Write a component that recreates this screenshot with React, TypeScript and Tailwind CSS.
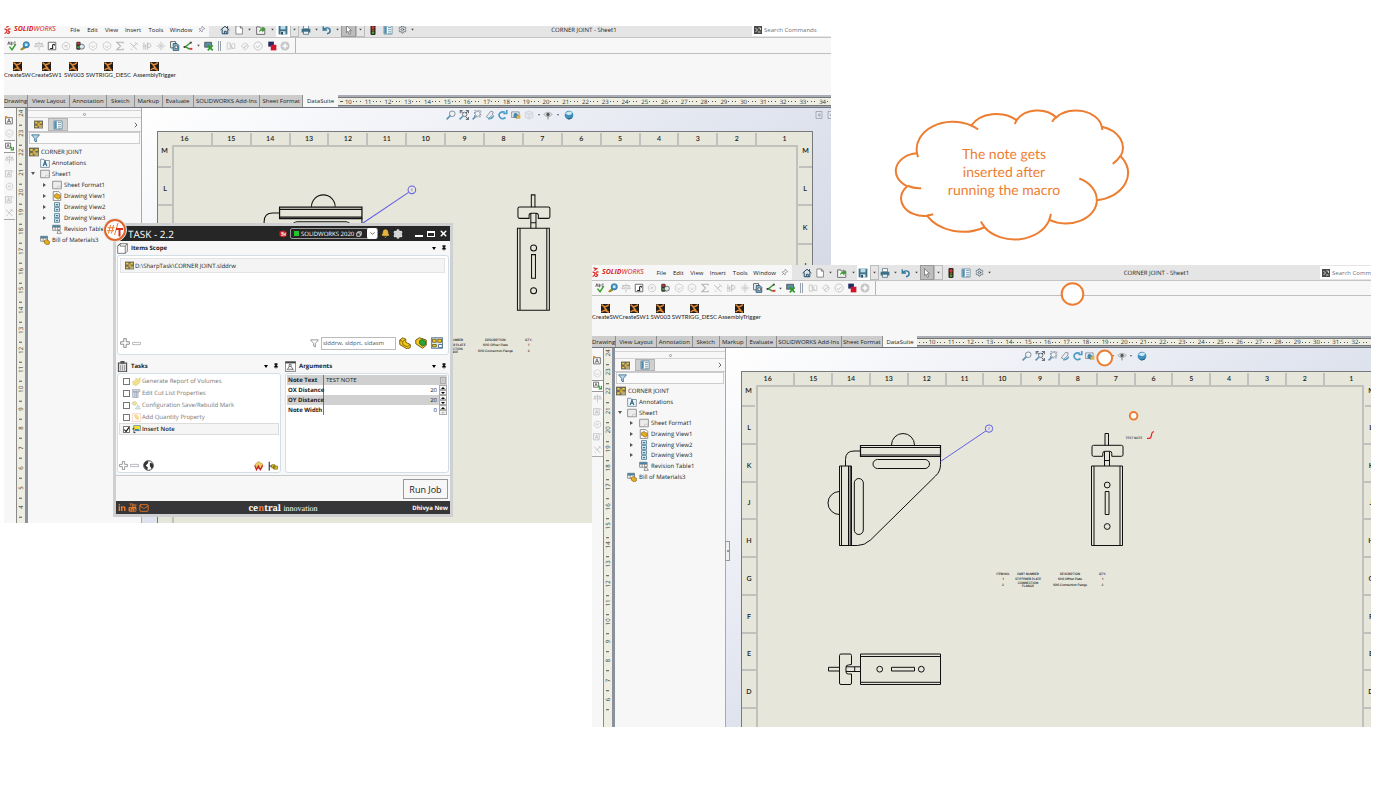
import { useState } from "react";
import type { ReactNode } from "react";
import clsx from "clsx";
import { Pin, Settings, Mail, Bell, ChevronDown, ChevronRight, X } from "lucide-react";
import { FaLinkedinIn } from "react-icons/fa";

type Size = "large" | "small";

const menus = ["File", "Edit", "View", "Insert", "Tools", "Window"];
const macros = ["CreateSW", "CreateSW1", "SW003", "SWTRIGG_DESC", "AssemblyTrigger"];
const tabs = ["Drawing", "View Layout", "Annotation", "Sketch", "Markup", "Evaluate", "SOLIDWORKS Add-Ins", "Sheet Format", "DataSuite"];
const zoneRows = ["L", "K", "J", "H", "G", "F", "E", "D"];

function range(from: number, to: number) {
  const out: number[] = [];
  for (let i = from; from < to ? i <= to : i >= to; i += from < to ? 1 : -1) out.push(i);
  return out;
}

/* ---------- icons ---------- */

const glyphs: Record<string, ReactNode> = {
  caret: <path d="M5 6h6l-3 4z" fill="#444" />,
  home: <path d="M1 8l7-6 7 6M3.500 7v7h9V7M7 14v-4h3v4M12 2v3" stroke="#1f4e66" fill="none" strokeWidth="1.600" />,
  file: <path d="M3 1.500h7l3.500 3.500v9.500H3zM10 1.500V5h3.500" stroke="#555" fill="#fff" />,
  open: (
    <>
      <path d="M1 3h5l1 2h7v10H1z" fill="#f6f6f6" stroke="#555" strokeWidth="1.300" />
      <path d="M5 12c0-5 3-6 5-6V2l5 5-5 5V9c-2 0-4 .5-5 3z" fill="#3f9b35" />
    </>
  ),
  save: (
    <>
      <path d="M1 1h14v14H1z" fill="#3f7189" />
      <path d="M4 1h8v6H4z" fill="#b9dbe9" />
      <path d="M4 10h8v5H4z" fill="#d9e6ec" />
      <path d="M5 11h3v4H5z" fill="#24465a" />
    </>
  ),
  print: (
    <>
      <path d="M4 1h8v5H4z" fill="#fff" stroke="#31566b" />
      <path d="M1 6h14v6H1z" fill="#3c708a" />
      <path d="M4 10h8v5H4z" fill="#e5eff4" stroke="#31566b" />
    </>
  ),
  undo: <path d="M2 2v6h6M2.500 7.500C6 3 13 4 13 9c0 3-2 4.500-5 5" stroke="#32779d" fill="none" strokeWidth="2.200" />,
  cursor: <path d="M4 1l8 8H8.500l2 5-2 1-2-5L4 12z" fill="#fff" stroke="#555" />,
  traffic: (
    <>
      <rect x="4" y="0" width="8" height="16" rx="2" fill="#322" />
      <circle cx="8" cy="4" r="2.400" fill="#d33a2c" />
      <circle cx="8" cy="8.500" r="1.800" fill="#8a6a1a" />
      <circle cx="8" cy="12.500" r="2.200" fill="#3fa23c" />
    </>
  ),
  list: (
    <>
      <path d="M1.500 1.500h13v13h-13z" fill="#fff" stroke="#3b6f8c" />
      <path d="M2 2h4v12H2z" fill="#4e8fb0" />
      <path d="M8 4h5M8 7h5M8 10h5M8 13h5" stroke="#3b6f8c" />
    </>
  ),
  spell: (
    <>
      <path d="M1 6l2-5 2 5M2 4.500h2M6.500 1v5h1.500q1-1 0-2.500H7q2-1 0-2M14 2q-3-2-3 1.500T14 5" stroke="#333" fill="none" />
      <path d="M4 9l4 5 6-9" stroke="#35a02c" fill="none" strokeWidth="2.400" />
    </>
  ),
  zoomPart: (
    <>
      <path d="M7 9l-6 5M2 14l6-3" stroke="#a48620" strokeWidth="2.400" />
      <circle cx="10" cy="6" r="5" fill="#3f9ad0" stroke="#285a78" />
      <path d="M8 4h4v4H8z" fill="#d7e9f2" />
    </>
  ),
  scale: <path d="M8 1v14M2 4h12M1 9l2.500-5L6 9zM10 9l2.500-5L15 9z" stroke="#bdbdbd" fill="none" strokeWidth="1.300" />,
  note: (
    <>
      <path d="M2 2h12v12H2z" fill="#fff" stroke="#666" strokeWidth="1.500" />
      <path d="M5 12h4V6M9 6q3-2 3 1" stroke="#222" fill="none" strokeWidth="1.800" />
    </>
  ),
  ringGrey: <path d="M8 2a6 6 0 1 0 .1 0M5 9l6-3M6 6l4 5" stroke="#c4c4c4" fill="none" strokeWidth="1.300" />,
  lights: (
    <>
      <rect x="2" y="1" width="7" height="13" rx="2" fill="#333" />
      <circle cx="5.500" cy="4" r="2" fill="#d43a2b" />
      <circle cx="5.500" cy="10" r="2" fill="#43a03b" />
      <circle cx="11" cy="9" r="4" fill="#dceaf0" stroke="#333" />
    </>
  ),
  hexGrey: <path d="M8 1l6 3.500v6L8 15l-6-4V4.500zM5 7l3 4 3-4" stroke="#c6c6c6" fill="none" strokeWidth="1.200" />,
  sigma: <path d="M13 4V2H3l6 6-6 6h10v-2" stroke="#b5b5b5" fill="none" strokeWidth="1.700" />,
  crossGrey: <path d="M2 3l11 11M13 3L6 10M3 12l2 2M10 2l4 4" stroke="#bdbdbd" fill="none" strokeWidth="1.600" />,
  barsGrey: <path d="M3 2v12M6 5v9M1 8h6M9 3l5 2v4l-5 2zM9 3v11" stroke="#c0c0c0" fill="none" strokeWidth="1.400" />,
  starGrey: <path d="M8 1v14M1 8h14M4 4l2 2M12 4l-2 2M4 12l2-2M12 12l-2-2" stroke="#c0c0c0" fill="none" strokeWidth="1.400" />,
  docs: (
    <>
      <path d="M1 1h8v10H1z" fill="#fff" stroke="#444" strokeWidth="1.300" />
      <path d="M5 4h6l3 3v8H5z" fill="#7fb0cb" stroke="#2a5068" strokeWidth="1.300" />
      <path d="M8 8h4v4H8z" fill="#fff" stroke="#444" />
    </>
  ),
  section: (
    <>
      <path d="M13 2L4 9l6 4" stroke="#3d9a3a" fill="none" strokeWidth="2.400" />
      <path d="M11 1h3v3h-3zM1 8h3v3H1z" fill="#444" />
      <path d="M10 11h5v3h-5z" fill="#cf3a2c" />
    </>
  ),
  tableX: (
    <>
      <path d="M1 2h11v8H1z" fill="#5d8ba3" stroke="#333" />
      <path d="M6 7l8 8M14 7l-8 8" stroke="#2f9b2b" strokeWidth="2.600" />
    </>
  ),
  partGrey: <path d="M2 3v10h5V3zM9 6l3-3 2 2v7h-5zM5 6l6 5" stroke="#c8c8c8" fill="none" strokeWidth="1.400" />,
  layersGrey: <path d="M2 8l6-5 4 2-6 6zM5 12l6-5 3 1-5 6z" stroke="#c8c8c8" fill="none" strokeWidth="1.400" />,
  checkGrey: <path d="M8 1.500a6.500 6.500 0 1 0 .1 0M5 8l2.500 3 4-5" stroke="#c6c6c6" fill="none" strokeWidth="1.500" />,
  colors: (
    <>
      <path d="M2 1h9v8H2z" fill="#1f2d63" />
      <path d="M6 6h9v9H6z" fill="#d4142b" />
    </>
  ),
  plusGrey: (
    <>
      <circle cx="8" cy="8" r="6.500" fill="#c9c9c9" stroke="#b8b8b8" />
      <path d="M8 4v8M4 8h8" stroke="#fff" strokeWidth="2.400" />
    </>
  ),
  macro: (
    <>
      <path d="M0 0h16v16H0z" fill="#221d1a" />
      <path d="M1 1l5 4 4-1 4-3M1 14l5-3 3 1 5 3M5 5l6 7" stroke="#e08a35" fill="none" strokeWidth="2.600" />
    </>
  ),
  lens: (
    <>
      <circle cx="10" cy="6" r="4.500" fill="#eef4f8" stroke="#7d8994" strokeWidth="1.500" />
      <path d="M7 9l-6 6" stroke="#5f93b5" strokeWidth="2.600" />
    </>
  ),
  lensFit: (
    <>
      <path d="M2 5V1h4M11 1h4v4M15 11v4h-4" stroke="#67727c" fill="none" strokeWidth="1.800" />
      <circle cx="9" cy="7" r="3.500" fill="#e6eef4" stroke="#67727c" strokeWidth="1.500" />
      <path d="M6 10l-5 5" stroke="#5f93b5" strokeWidth="2.600" />
      <path d="M3 2l3 3M14 2l-3 3M14 14l-3-3" stroke="#555" strokeWidth="1.500" />
    </>
  ),
  lensArea: (
    <>
      <path d="M4 1h10v10H4z" stroke="#8d98a3" fill="none" strokeWidth="1.500" strokeDasharray="3 2" />
      <circle cx="9" cy="6" r="4" fill="#eef4f8" stroke="#8d98a3" strokeWidth="1.300" />
      <path d="M6 10l-5 5" stroke="#5f93b5" strokeWidth="2.600" />
    </>
  ),
  pen: (
    <>
      <path d="M2 11l7-9 4 1-1 5-6 5z" fill="#e8edf1" stroke="#7c8690" strokeWidth="1.300" />
      <path d="M5 14q6 1 9-5" stroke="#5aa0c6" fill="none" strokeWidth="2.200" />
    </>
  ),
  rotate: <path d="M12 12q-5 4-8.500 0t-.5-7 8-1.500M14 0v5.500H8.500" stroke="#4b9bc8" fill="none" strokeWidth="2.600" />,
  views: (
    <>
      <path d="M1 3h12v9H1z" fill="#e8eef2" stroke="#5d6b76" />
      <path d="M4 8q0-4 5-3l4 4-4 5-5-3z" fill="#4687ab" />
      <path d="M9 9l6-2v7H9z" fill="#dfb04a" />
    </>
  ),
  cubeGrey: <path d="M2 4l6-2.500L14 4v8l-6 2.500L2 12zM2 4l6 2.500L14 4M8 6.500v8" fill="#e3e6ea" stroke="#c5c9cf" />,
  eye: (
    <>
      <path d="M1 7q7-7 14 0-7 7-14 0z" fill="#d9dde0" stroke="#999" />
      <circle cx="8" cy="7" r="2.600" fill="#555" />
      <path d="M8 10v5" stroke="#777" strokeWidth="1.500" />
    </>
  ),
  ball: (
    <>
      <circle cx="8" cy="8" r="7" fill="#3f92bf" />
      <path d="M2 6q5-6 11-2-1 5-6 4z" fill="#cfe8f3" />
      <path d="M2 12q6 4 12-2l-2 4-5 1z" fill="#285e7e" />
    </>
  ),
  sheetRoot: (
    <>
      <path d="M0 1h16v14H0z" fill="#6c6a5c" />
      <path d="M2 3h4v3H2zM10 3h4v3h-4zM2 10h4v3H2z" fill="#f2ca3e" />
      <path d="M7 5h3v2l3 3v3h-3l-4-4z" fill="#d9a92a" />
      <path d="M9 9h6v5H9z" fill="#b8ab78" />
    </>
  ),
  annot: (
    <>
      <path d="M1 2h5l1 2h8v11H1z" fill="#f4f7f9" stroke="#6a8597" strokeWidth="1.300" />
      <path d="M5 13l3-8 3 8M6 10h4" stroke="#27607f" fill="none" strokeWidth="1.700" />
    </>
  ),
  sheet: (
    <>
      <path d="M1 2h14v12H1z" fill="#ececec" stroke="#8f8f8f" strokeWidth="1.500" />
      <path d="M9 10h5v3H9z" fill="#fff" stroke="#b5b5b5" />
    </>
  ),
  view1: (
    <>
      <path d="M2 1h9l3 3v11H2z" fill="#fff" stroke="#777" strokeWidth="1.300" />
      <path d="M4 6l4-2 5 3v4l-3 2-6-3z" fill="#e6ad1e" stroke="#8a6410" />
    </>
  ),
  view2: (
    <>
      <path d="M4 1h8v6H4zM4 9h8v6H4z" fill="#e9f2f6" stroke="#4f7f97" strokeWidth="1.400" />
      <path d="M6 4h4M6 12h4" stroke="#3b7a9b" strokeWidth="2" />
    </>
  ),
  revTable: (
    <>
      <path d="M1 2h12v8H1zM1 5h12M5 2v8M9 2v8" fill="#fff" stroke="#555" />
      <path d="M1 2h12v3H1z" fill="#4a83a1" />
      <path d="M8 15l3-6 4 6z" fill="#fff" stroke="#555" />
    </>
  ),
  bom: (
    <>
      <path d="M1 2h11v8H1zM1 5h11M5 2v8" fill="#fff" stroke="#555" />
      <path d="M1 2h11v3H1z" fill="#4a83a1" />
      <path d="M7 9l3-2 5 3v4l-3 2-5-3z" fill="#e6ad1e" stroke="#7a5a10" />
    </>
  ),
  funnel: <path d="M1 1.500h14L9.500 8v6l-3-1.500V8z" fill="#b9d6e6" stroke="#37708f" strokeWidth="1.500" />,
  funnelGrey: <path d="M1 1.500h14L9.500 8v6l-3-1.500V8z" fill="none" stroke="#777" strokeWidth="1.300" />,
  side: <path d="M1 3h10v11H1zM4 12l2.500-7L9 12M5 10h3M12 2l3 3" stroke="#b9b9b9" fill="none" strokeWidth="1.300" />,
  sideNote: (
    <>
      <path d="M1 3h12v11H1zM4 12l3-7 3 7M5 10h4" stroke="#444" fill="#fff" strokeWidth="1.300" />
      <path d="M0 0h4v4H0z" fill="#e0912f" />
    </>
  ),
  sideActive: (
    <>
      <path d="M1 2h9v9H1zM3.500 9L5.500 4l2 5" stroke="#444" fill="#fff" strokeWidth="1.300" />
      <path d="M9 8l6 6M15 9v5h-5" stroke="#35a02c" fill="none" strokeWidth="2.400" />
    </>
  ),
  command: (
    <>
      <path d="M0 0h16v16H0z" fill="#4a4a4a" />
      <path d="M3 4l4 4-4 4M8 12h5M9 4h4v4" stroke="#fff" fill="none" strokeWidth="1.500" />
    </>
  ),
  winBtn: <path d="M2 1h12v14H2zM10 5l-4 3 4 3z" stroke="#8a8f98" fill="none" strokeWidth="1.300" />,
  copyDoc: <path d="M4.500 1H15v11l-3 3H1V4.500zM4.500 1L1 4.500M12 15V4.500L15 1M12 4.500H4.500V1" fill="#fff" stroke="#444" />,
  clipboard: (
    <>
      <path d="M2 3h12v12.500H2z" fill="#ddd" stroke="#444" strokeWidth="1.500" />
      <path d="M5 0h6v4H5z" fill="#555" />
      <path d="M5 6v8M8 6v8M11 6v8" stroke="#888" />
    </>
  ),
  argIcon: (
    <>
      <path d="M.5 1h15v14H.5z" fill="#fff" stroke="#444" />
      <path d="M.5 1h15v2.500H.5z" fill="#444" />
      <path d="M6 5h3v3H6zM3 13l3-5M12 13L9 8M4 12h8" stroke="#444" fill="none" />
    </>
  ),
  plus: <path d="M6 1h4v5h5v4h-5v5H6v-5H1V6h5z" fill="#fff" stroke="#777" strokeWidth="1.300" />,
  minus: <path d="M1 6h14v4H1z" fill="#fff" stroke="#9a9aa6" strokeWidth="1.200" />,
  globe: (
    <>
      <circle cx="8" cy="8" r="7" fill="#fff" stroke="#333" strokeWidth="1.300" />
      <path d="M8 1q-7 1-7 7 1 5 5 7l1-4-3-3 3-3 1-4zM10 4l4 1 1 4-2 4-3-4z" fill="#333" />
    </>
  ),
  part: (
    <>
      <path d="M1 4l4-3 4 2v4l6 3v4l-4 2-10-6z" fill="#f3c81c" stroke="#6b5310" strokeWidth="1.200" />
      <path d="M1 4l4 2 4-3M5 6v4l6 3 4-3" fill="none" stroke="#6b5310" />
    </>
  ),
  assembly: (
    <>
      <path d="M1 4l5-3 9 3v7l-5 4-9-6z" fill="#f3c81c" stroke="#6b5310" strokeWidth="1.200" />
      <path d="M6 5l4-2 4 3v4l-4 2-4-3z" fill="#27a53a" stroke="#1c5e25" />
    </>
  ),
  drawingDoc: (
    <>
      <path d="M.5 1h15v14H.5z" fill="#dfe7ee" stroke="#2f587a" />
      <path d="M2 3h5v4H2zM9 3h5v4H9zM2 10h5v3H2z" fill="#f3c81c" stroke="#5e4c12" />
      <path d="M10 10h5v4h-5z" fill="#fff" stroke="#2f587a" />
    </>
  ),
  taskVolume: <path d="M1 8l5-2 1-4 4 2 4-3-1 9-6 5-6-1z" fill="#f3df85" stroke="#c9d4a8" />,
  taskCut: <path d="M1 1h13v4H1zM1 5h10v10H1zM5 5v10M8 5v10" fill="#d5dbe3" stroke="#8d9aab" />,
  taskConfig: (
    <>
      <path d="M1 2l5-1 3 3-3 4-5-2z" fill="#f4e190" stroke="#bfc99d" />
      <path d="M6 14l4-6 5 6zM9 7l5 3" fill="#e5f1e4" stroke="#9db7c7" />
    </>
  ),
  taskQty: (
    <>
      <path d="M1 1h14v14H1z" fill="#fff" stroke="#f5b9b0" />
      <path d="M4 4l4-1 4 5-1 4-4-2z" fill="#f8df8c" stroke="#e8cf7a" />
    </>
  ),
  taskNote: (
    <>
      <path d="M3 1h12v9H3z" fill="#f5e12e" stroke="#2f68a8" />
      <path d="M5 7h6l3 3H6z" fill="#3f7ec2" />
      <path d="M1 8l3-3M2 12l4 2" stroke="#4a4a4a" strokeWidth="2" />
    </>
  ),
  swRed: (
    <>
      <path d="M1 3l8-2 6 3v8l-6 3-8-3z" fill="#c9252b" />
      <path d="M4 5h4v2H5v1h3v3H4M9 5l1 6 1.500-4 1 4 1-6" stroke="#fff" fill="none" strokeWidth="1.200" />
    </>
  ),
  partW: (
    <>
      <path d="M2 5l5-4 7 4-2 7H4z" fill="#f0cf62" stroke="#a98a36" />
      <path d="M1 7l3 7 3-6 3 6 4-7" stroke="#cc2229" fill="none" strokeWidth="2" />
    </>
  ),
  pipe: (
    <>
      <path d="M2 1v14M2 8h6" stroke="#333" fill="none" strokeWidth="1.800" />
      <path d="M6 6h5v5H6zM9 8h6v5H9z" fill="#e9cf22" stroke="#5a4a10" />
    </>
  ),
  tube: (
    <>
      <path d="M3 0l2 3.500V6M7 0L5 3.500M8 2h2v4H8zM12 2v4h2V2" fill="none" stroke="#ee7a28" strokeWidth="1.200" />
      <rect x="1" y="7" width="14" height="8.500" rx="2" fill="#ee7a28" />
      <path d="M3 9.500h3M4.500 9.500V14M7.500 10.500V14H9M11 9v5h2v-3h-2" fill="none" stroke="#363639" />
    </>
  ),
};

function Icon({ name, className = "size-2" }: { name: string; className?: string }) {
  return (
    <svg viewBox="0 0 16 16" className={clsx("block shrink-0", className)} aria-hidden="true">
      {glyphs[name]}
    </svg>
  );
}

function IconButton({ name, className = "size-2", box = "" }: { name: string; className?: string; box?: string }) {
  return (
    <button type="button" aria-label={name} className={clsx("flex items-center justify-center", box)}>
      <Icon name={name} className={className} />
    </button>
  );
}

/* ---------- SOLIDWORKS window ---------- */

function TitleBar({ large }: { large: boolean }) {
  const quick = ["home", "file", "caret", "open", "caret", "save", "caret", "print", "caret", "undo", "caret", "cursor", "caret", "traffic", "list"];
  return (
    <header className="flex h-4 items-stretch border-b border-[#c4c4c4] bg-[#e5e5e5]">
      <div
        className={clsx(
          "grid shrink-0 grid-cols-[62fr_18fr_17fr_21fr_22fr_24fr_26fr_15fr] items-center justify-items-center bg-[#f7f7f7]",
          large ? "w-[205px]" : "w-[200px]",
        )}
      >
        <div className="flex w-full items-center gap-[2px] text-[7px] text-[#d9281e] italic">
          <svg viewBox="0 0 8 14" className="h-3 w-2 shrink-0" aria-hidden="true">
            <path d="M1 1l4 1-3 2M0 6q4 0 2 4l-2 1M7 6q-3-1-3 1t2 2q0 2-3 2" fill="none" stroke="#d9281e" strokeWidth="1.300" />
          </svg>
          <span>
            <b>SOLID</b>WORKS
          </span>
        </div>
        {menus.map((m) => (
          <button key={m} type="button">
            {m}
          </button>
        ))}
        <Pin className="size-[7px] rotate-45 text-gray-500" />
      </div>
      <div
        className={clsx(
          "grid shrink-0 grid-cols-[14fr_15fr_7fr_16fr_7fr_14fr_8fr_14fr_7fr_15fr_7fr_15fr_7fr_16fr_15fr_14fr_7fr] items-stretch",
          large ? "ml-[9px] w-[198px]" : "ml-2 w-[193px]",
        )}
      >
        {quick.map((name, i) => (
          <IconButton
            key={i}
            name={name}
            className={name === "caret" ? "size-[7px]" : "size-[10px]"}
            box={name === "save" ? "bg-white" : name === "cursor" ? "border border-[#999] bg-[#bdbdbd]" : i === 12 || i === 6 ? "border border-[#bbb]" : ""}
          />
        ))}
        <button type="button" aria-label="Options" className="flex items-center justify-center">
          <Settings className="size-[9px] text-gray-600" />
        </button>
        <IconButton name="caret" className="size-[7px]" />
      </div>
      <h1 className="flex flex-1 items-center justify-center">CORNER JOINT - Sheet1</h1>
      <label className={clsx("my-px flex shrink-0 items-center gap-[2px] overflow-hidden bg-white pl-[2px]", large ? "w-[79px]" : "w-[51px]")}>
        <Icon name="command" />
        <input
          aria-label="Search Commands"
          placeholder="Search Commands"
          className="w-[66px] shrink-0 outline-none placeholder:text-gray-500"
        />
      </label>
    </header>
  );
}

function CommandBar({ large }: { large: boolean }) {
  const tools = [
    "spell", "zoomPart", "scale", "note", "ringGrey", "lights", "hexGrey", "hexGrey", "sigma", "crossGrey", "barsGrey", "starGrey", "docs", "section",
    "caret", "tableX", "split", "partGrey", "layersGrey", "checkGrey", "colors", "plusGrey",
  ];
  return (
    <div className={clsx("flex border-b border-[#c0c0c0]", large ? "h-4" : "h-[15px]")}>
      <div
        className={clsx(
          "grid grid-cols-[repeat(14,14fr)_7fr_14fr_9fr_repeat(5,14fr)] items-center justify-items-center border-r border-[#b5b5b5] pr-[3px] pl-px",
          large ? "w-[292px]" : "w-[284px]",
        )}
      >
        {tools.map((name, i) =>
          name === "split" ? (
            <span key={i} className="h-[10px] w-[3px] border-x border-gray-400" />
          ) : (
            <IconButton key={i} name={name} className={name === "caret" ? "size-[7px]" : "size-[10px]"} />
          ),
        )}
      </div>
    </div>
  );
}

function Ribbon({ large }: { large: boolean }) {
  return (
    <div className={large ? "h-[41px]" : "h-10"}>
      <div className={clsx("grid grid-cols-[26fr_32fr_24fr_44fr_48fr] pt-2", large ? "w-[174px]" : "w-[170px]")}>
        {macros.map((m) => (
          <button key={m} type="button" className="flex flex-col items-center justify-self-center whitespace-nowrap">
            <Icon name="macro" className="size-[9px]" />
            <span className="font-['Lato',sans-serif] leading-[8px]">{m}</span>
          </button>
        ))}
      </div>
    </div>
  );
}

function Ticks({ vertical = false }: { vertical?: boolean }) {
  return (
    <span className={clsx("flex justify-between", vertical ? "h-2 flex-col" : "w-2")}>
      <i className="size-px bg-[#555]" />
      <i className="size-px bg-[#555]" />
      <i className="size-px bg-[#555]" />
    </span>
  );
}

function TabBar({ large }: { large: boolean }) {
  return (
    <div className={clsx("flex items-stretch border-b border-[#6f737a] bg-[#a9adb6]", large ? "h-[13px]" : "h-3")}>
      <nav
        className={clsx(
          "grid shrink-0 grid-cols-[23fr_42fr_37fr_28fr_28fr_31fr_67fr_43fr_35fr]",
          large ? "w-[334px]" : "w-[325px]",
        )}
      >
        {tabs.map((t, i) => (
          <button
            key={t}
            type="button"
            className={clsx(
              "flex items-center justify-center whitespace-nowrap",
              i === tabs.length - 1 ? "bg-[#f7f7f7]" : "border-r border-[#8f8f8f] bg-[#cccccc]",
            )}
          >
            {t}
          </button>
        ))}
      </nav>
      <div className="mt-[2px] mb-px flex min-w-0 flex-1 items-center overflow-hidden border-y border-[#777] bg-[#eeeee2] pl-[2px]">
        <Ticks />
        <div
          className={clsx(
            "grid shrink-0 grid-flow-col auto-cols-fr items-center text-[6px] text-[#333]",
            large ? "w-[494px]" : "w-[442px]",
          )}
        >
          {range(10, large ? 34 : 32).map((n) => (
            <span key={n} className="flex items-center justify-center gap-px">
              {n}
              <Ticks />
            </span>
          ))}
        </div>
      </div>
    </div>
  );
}

function SideTools({ large }: { large: boolean }) {
  const tools = ["sideNote", "hexGrey", "sideActive", "scale", "side", "ringGrey", "side", "crossGrey"];
  return (
    <div className={clsx("shrink-0 border-r border-[#8a8a8a]", large ? "w-[13px]" : "w-3")}>
      <div className={clsx("grid w-[11px] auto-rows-fr border-b border-[#aaa] pt-[6px]", large ? "h-28" : "h-[109px]")}>
        {tools.map((name, i) => (
          <IconButton key={i} name={name} className="size-[9px]" box={i === 2 ? "border-y border-[#999] bg-white" : ""} />
        ))}
      </div>
    </div>
  );
}

function VerticalRuler({ large }: { large: boolean }) {
  return (
    <div className="w-[11px] shrink-0 overflow-hidden border-r-[3px] border-[#8c909a] bg-[#eeeee2]">
      <div className={clsx("grid auto-rows-fr text-[6px] text-[#333]", large ? "h-[414px]" : "h-[365px]")}>
        {range(24, large ? 4 : 6).map((n) => (
          <span key={n} className="flex rotate-180 flex-row-reverse items-center justify-center gap-px [writing-mode:vertical-rl]">
            {n}
            <Ticks vertical />
          </span>
        ))}
      </div>
    </div>
  );
}

const tree = [
  { label: "CORNER JOINT", icon: "sheetRoot", level: 0, arrow: "" },
  { label: "Annotations", icon: "annot", level: 1, arrow: "" },
  { label: "Sheet1", icon: "sheet", level: 1, arrow: "down" },
  { label: "Sheet Format1", icon: "sheet", level: 2, arrow: "right" },
  { label: "Drawing View1", icon: "view1", level: 2, arrow: "right" },
  { label: "Drawing View2", icon: "view2", level: 2, arrow: "right" },
  { label: "Drawing View3", icon: "view2", level: 2, arrow: "right" },
  { label: "Revision Table1", icon: "revTable", level: 2, arrow: "" },
  { label: "Bill of Materials3", icon: "bom", level: 1, arrow: "" },
];

function FeatureTree({ large }: { large: boolean }) {
  return (
    <aside className={clsx("relative shrink-0 border-r border-[#a9a9a9] bg-[#f7f7f7]", large ? "w-[114px]" : "w-[111px]")}>
      <div className={clsx("flex h-2 items-center justify-center border-y border-[#d3d3d3]", large ? "mt-[2px]" : "mt-[3px]")}>
        <span className="size-[3px] rounded-full border border-[#999]" />
      </div>
      <div className={clsx("flex items-stretch border-b border-[#c9c9c9]", large ? "h-[14px]" : "h-[13px]")}>
        <IconButton name="sheetRoot" className="size-[9px]" box="w-5" />
        <IconButton name="list" className="size-[10px]" box="w-5 border border-[#b5b5b5] bg-[#cfcfcf]" />
        <button type="button" aria-label="Expand" className="mr-px ml-auto">
          <ChevronRight className="size-2" />
        </button>
      </div>
      <label className="mx-px flex h-3 items-center border border-[#ccc] bg-[#fbfbfb] pl-px">
        <Icon name="funnel" className="size-[9px]" />
        <input aria-label="Filter" className="w-full min-w-0 outline-none" />
      </label>
      <ul className={clsx("mt-[2px] grid auto-rows-fr", large ? "h-[99px]" : "h-24")}>
        {tree.map((n) => (
          <li key={n.label} className={clsx("flex items-center whitespace-nowrap", n.level === 1 && "pl-[2px]", n.level === 2 && "pl-[14px]")}>
            {n.level > 0 && (
              <span className="flex w-[10px] shrink-0 justify-start">
                {n.arrow === "down" && <span className="ml-px border-x-2 border-t-[3px] border-x-transparent border-t-[#555]" />}
                {n.arrow === "right" && <span className="ml-px border-y-2 border-l-[3px] border-y-transparent border-l-[#555]" />}
              </span>
            )}
            <Icon name={n.icon} className={clsx("mr-[2px] size-[10px]", n.level === 0 && "ml-px")} />
            {n.label}
          </li>
        ))}
      </ul>
      {!large && (
        <span className="absolute top-[193px] -right-[5px] flex h-5 w-[5px] items-center justify-center border border-[#999] bg-[#f1f1f1]">
          <i className="size-[2px] rounded-full bg-[#777]" />
        </span>
      )}
    </aside>
  );
}

function BomTable() {
  const cell = "p-0 text-center font-medium";
  return (
    <table className="w-full table-fixed border-collapse font-['Inter',sans-serif] text-[3px] leading-[5px] whitespace-nowrap text-black">
      <colgroup>
        <col className="w-[14px]" />
        <col className="w-[36px]" />
        <col className="w-[48px]" />
        <col className="w-[17px]" />
      </colgroup>
      <thead>
        <tr>
          <th className={cell}>ITEM NO.</th>
          <th className={cell}>PART NUMBER</th>
          <th className={cell}>DESCRIPTION</th>
          <th className={cell}>QTY.</th>
        </tr>
      </thead>
      <tbody>
        <tr>
          <td className={cell}>1</td>
          <td className={cell}>STIFFENER PLATE</td>
          <td className={cell}>1010 Offner Plate</td>
          <td className={cell}>1</td>
        </tr>
        <tr className="leading-[3px]">
          <td className={cell}>2</td>
          <td className={cell}>
            CONNECTION
            <br />
            FLANGE
          </td>
          <td className={cell}>1010 Connection Flange</td>
          <td className={cell}>2</td>
        </tr>
      </tbody>
    </table>
  );
}

function PartDrawing({ note }: { note: boolean }) {
  return (
    <svg viewBox="758 387 604 339" className="block w-full" aria-label="Corner joint views">
      <g fill="none" stroke="#111" strokeWidth="1">
        {/* front view */}
        <path d="M891.500 445a11.500 11.500 0 0 1 23 0" />
        <path d="M860.500 445.500h80v11h-80zM860.500 447.500h80M860.500 455h80" strokeWidth="1.200" />
        <path d="M860.500 451h-6.500q-8.500 0-8.500 8.500v6.500" />
        <path d="M839.500 466h12v79.500h-12zM841.500 466v79.500M848.500 466v79.500M850.200 466v79.500" />
        <path d="M839.500 491.500a11.500 11.500 0 0 0 0 23" />
        <rect x="873" y="459.500" width="56.500" height="9" rx="4.500" />
        <rect x="854.300" y="478.500" width="9" height="56" rx="4.500" />
        <path d="M940.500 456.500v8q0 7-5 11.500L870.500 540q-6 5.500-13 5.500h-18" />
        {/* side view */}
        <path d="M1105 445.500v-12h3.500v12" />
        <path d="M1111.800 456.300v-3q0-2-2-2h-5q-2 0-2 2v3h-9.300q-1.500 0-1.500-1.500v-8q0-1.500 1.500-1.500h28q1.500 0 1.500 1.500v8q0 1.500-1.500 1.500zM1104.500 451.500v14.500M1109.500 451.500v14.500M1104.500 460.500h5" />
        <path d="M1091.500 466h31v79.500h-31zM1094 466v79.500M1120 466v79.500" />
        <circle cx="1107.200" cy="485" r="2.900" />
        <circle cx="1107.200" cy="526.500" r="2.900" />
        <path d="M1105.200 491.500h3.800v23h-3.800z" />
        {/* bottom view */}
        <path d="M860.500 654h80v30.500h-80zM860.500 656.500h80M860.500 682.300h80" />
        <circle cx="879.700" cy="669.200" r="2.900" />
        <circle cx="921.300" cy="669.200" r="2.900" />
        <path d="M891.500 667.300h23v3.700h-23zM839.500 667.300h-11v3.700h11" />
        <path d="M851.500 664.500v-9q0-1.500-1.500-1.500h-9q-1.500 0-1.500 1.500v27.500q0 1.500 1.500 1.500h9q1.500 0 1.500-1.500v-9h-3q-2.500 0-2.500-2v-5q0-2 2.500-2zM846 666.800h14.500M846 671.500h14.500M854.700 666.800v4.700" />
      </g>
      <g fill="none" stroke="#6260e6" strokeWidth="1">
        <path d="M940.500 461.500L985.800 431" />
        <circle cx="989" cy="428.600" r="3.700" />
        <path d="M989 427v3" strokeWidth=".6" />
      </g>
      <foreignObject x="996" y="572" width="115" height="20">
        <BomTable />
      </foreignObject>
      {note && (
        <>
          <text x="1125.500" y="438.600" fontSize="3" fontWeight="500" fill="#111" className="font-['Inter',sans-serif]">
            TEST NOTE
          </text>
          <path d="M1147 438.300h2.500q1.500 0 2-3.500t2.500-3" fill="none" stroke="#e8222b" strokeWidth="1.200" />
        </>
      )}
    </svg>
  );
}

function ZoneColumn({ large, side }: { large: boolean; side: "left" | "right" }) {
  return (
    <div className="w-[14px] shrink-0 text-center font-['Lato',sans-serif] text-[7px] font-semibold text-[#222]">
      <div className={clsx("border-b-2 border-[#c0c0bc] leading-[13px]", side === "left" ? "mr-px" : "ml-px", large ? "h-[23px]" : "h-[22px]")}>M</div>
      <div className={clsx("grid auto-rows-fr", large ? "h-[307px]" : "h-[302px]")}>
        {zoneRows.map((z) => (
          <span key={z} className="flex items-center justify-center border-b-2 border-[#c0c0bc] pt-[7px]">
            {z}
          </span>
        ))}
      </div>
    </div>
  );
}

function DrawingArea({ large }: { large: boolean }) {
  const hud = ["lens", "lensFit", "lensArea", "pen", "rotate", "views", "cubeGrey", "caret", "eye", "caret", "ball"];
  return (
    <main className="min-w-0 flex-1 overflow-hidden bg-linear-to-br from-white via-[#dfe3ee] to-[#c5cbda]">
      <div className={clsx("flex h-[23px] items-start", large ? "pt-[2px]" : "pt-[3px]")}>
        <div
          className={clsx(
            "grid grid-cols-[repeat(7,13fr)_7fr_12fr_7fr_15fr] items-center justify-items-center",
            large ? "ml-[302px] w-[132px]" : "ml-[295px] w-[128px]",
          )}
        >
          {hud.map((name, i) => (
            <IconButton key={i} name={name} className={name === "caret" ? "size-[6px]" : "size-[10px]"} />
          ))}
        </div>
        {large && (
          <div className="-mr-1 ml-auto flex gap-1 pt-px">
            <IconButton name="winBtn" />
            <IconButton name="winBtn" />
          </div>
        )}
      </div>
      <div className={clsx("ml-[15px] h-full border border-[#77797c] bg-[#e6e6da]", large ? "w-[656px]" : "w-[638px]")}>
        <div className="grid h-[13px] grid-cols-[55fr_repeat(14,39fr)_55fr] pt-px font-['Lato',sans-serif] text-[7px] font-semibold text-[#222]">
          {range(16, 1).map((n) => (
            <span key={n} className={clsx("flex items-center justify-center", n > 1 && "border-r-2 border-[#c0c0bc]")}>
              {n}
            </span>
          ))}
        </div>
        <div className="flex h-full">
          <ZoneColumn large={large} side="left" />
          <div className="min-w-0 flex-1 border-2 border-[#c0c0bc]">
            <PartDrawing note={!large} />
          </div>
          <ZoneColumn large={large} side="right" />
        </div>
      </div>
    </main>
  );
}

function SolidWorksWindow({ size, className }: { size: Size; className: string }) {
  const large = size === "large";
  return (
    <section className={clsx("absolute overflow-hidden bg-[#f7f7f7] text-[6px] leading-none text-[#222]", className)}>
      <div className={clsx("flex flex-col", large ? "-mt-1 h-[501px]" : "h-full")}>
        <TitleBar large={large} />
        <CommandBar large={large} />
        <Ribbon large={large} />
        <TabBar large={large} />
        <div className="flex min-h-0 flex-1">
          <SideTools large={large} />
          <VerticalRuler large={large} />
          <FeatureTree large={large} />
          <DrawingArea large={large} />
        </div>
      </div>
    </section>
  );
}

/* ---------- #TASK dialog ---------- */

function PanelHeader({ icon, title }: { icon: string; title: string }) {
  return (
    <div className="flex h-[14px] items-center gap-[3px] pr-[2px]">
      <Icon name={icon} className="size-[11px]" />
      <h2 className="font-bold text-[#222]">{title}</h2>
      <span className="mr-[2px] ml-auto border-x-2 border-t-[3px] border-x-transparent border-t-black" />
      <Pin className="size-[6px] fill-black" />
    </div>
  );
}

function TaskList() {
  const [tasks, setTasks] = useState([
    { label: "Generate Report of Volumes", icon: "taskVolume", on: false },
    { label: "Edit Cut List Properties", icon: "taskCut", on: false },
    { label: "Configuration Save/Rebuild Mark", icon: "taskConfig", on: false },
    { label: "Add Quantity Property", icon: "taskQty", on: false },
    { label: "Insert Note", icon: "taskNote", on: true },
  ]);
  const toggle = (i: number) => setTasks(tasks.map((t, k) => (k === i ? { ...t, on: !t.on } : t)));

  return (
    <div className="flex h-[100px] flex-col rounded-[3px] border border-[#d3dfe6] bg-white px-px pt-px">
      {tasks.map((t, i) => (
        <label
          key={t.label}
          className={clsx(
            "flex h-3 items-center border pl-[3px]",
            t.on ? "border-[#dcdcdc] bg-[#f5f5f5] font-semibold text-[#222]" : "border-transparent text-[#777]",
          )}
        >
          <span className="relative mr-[2px] flex">
            <input type="checkbox" checked={t.on} onChange={() => toggle(i)} className="size-[7px] appearance-none border border-[#777] bg-white" />
            {t.on && (
              <svg viewBox="0 0 8 8" className="pointer-events-none absolute inset-0 size-[7px]" aria-hidden="true">
                <path d="M1.500 4l2 2.300L6.800 1.500" fill="none" stroke="#111" strokeWidth="1.300" />
              </svg>
            )}
          </span>
          <Icon name={t.icon} className="mr-px size-[9px]" />
          {t.label}
        </label>
      ))}
      <div className="mt-auto mb-px flex items-center gap-[2px] pr-px">
        <IconButton name="plus" className="size-[9px]" />
        <IconButton name="minus" className="size-[9px]" />
        <IconButton name="globe" className="size-[11px]" box="ml-[2px]" />
        <IconButton name="partW" className="size-[10px]" box="ml-auto" />
        <IconButton name="pipe" className="size-[10px]" box="ml-[2px]" />
      </div>
    </div>
  );
}

function ArgumentList() {
  const rows = [
    { id: "note-text", label: "Note Text", value: "TEST NOTE" },
    { id: "ox", label: "OX Distance", value: "20" },
    { id: "oy", label: "OY Distance", value: "20" },
    { id: "note-width", label: "Note Width", value: "0" },
  ];
  return (
    <div className="h-[100px] rounded-[3px] border border-[#d3dfe6] bg-white px-px pt-px">
      {rows.map((r, i) => (
        <div key={r.id} className={clsx("flex h-[10px] items-stretch", i % 2 === 0 && "bg-[#d0d0d0]")}>
          <label htmlFor={r.id} className="flex w-[37px] shrink-0 items-center border-r border-[#777] pl-px font-bold whitespace-nowrap">
            {r.label}
          </label>
          <input id={r.id} defaultValue={r.value} className={clsx("min-w-0 flex-1 bg-transparent px-[2px] outline-none", i > 0 && "text-right")} />
          {i === 0 ? (
            <button type="button" aria-label="More" className="mr-px flex w-[6px] items-center justify-center self-center border border-[#aaa] text-[#777]">
              <ChevronRight className="size-[5px]" />
            </button>
          ) : (
            <span className="flex w-2 flex-col">
              <button type="button" aria-label="Increase" className="flex flex-1 items-center justify-center border border-[#aaa] bg-[#f4f4f4]">
                <i className="border-x-2 border-b-2 border-x-transparent border-b-black" />
              </button>
              <button type="button" aria-label="Decrease" className="flex flex-1 items-center justify-center border border-[#aaa] bg-[#f4f4f4]">
                <i className={clsx("border-x-2 border-t-2 border-x-transparent", i === 3 ? "border-t-[#bbb]" : "border-t-black")} />
              </button>
            </span>
          )}
        </div>
      ))}
    </div>
  );
}

function TaskDialog() {
  return (
    <section className="absolute top-[223px] left-[113px] w-[340px] border-[3px] border-[#cfd0d1] bg-[#f7f7f7] text-[6px] leading-none text-[#222]">
      <header className="flex h-[15px] items-center bg-[#262626] pr-[2px] pl-3 text-white">
        <svg viewBox="0 0 24 24" className="absolute -top-2 -left-[13px] size-6" aria-hidden="true">
          <circle cx="12" cy="12" r="11.500" fill="#fff" stroke="#ddd" strokeWidth="1" />
          <circle cx="12" cy="12" r="10" fill="#fff" stroke="#e0652a" strokeWidth="2" />
          <path d="M7.500 7L5.500 15.500M10.500 7L8.500 15.500M4.500 9.700h7M4 12.700h7M15 5l-3.500 12" fill="none" stroke="#ee7a28" />
          <path d="M13 11h7M16.500 11v7.500" fill="none" stroke="#d6301f" strokeWidth="2" />
        </svg>
        <h1 className="text-[10px]">TASK - 2.2</h1>
        <Icon name="swRed" className="ml-auto size-2" />
        <div className="ml-[3px] flex h-[11px] w-[88px] items-center rounded-[2px] border border-[#999] pl-[3px]">
          <span className="mr-[2px] size-[5px] bg-[#22c52d]" />
          SOLIDWORKS 2020
          <svg viewBox="0 0 8 8" className="ml-[2px] size-[6px]" aria-hidden="true">
            <path d="M2.500 2.500V1H7v4.500H5.500M1 2.500h4.500V7H1z" fill="none" stroke="#fff" />
          </svg>
          <button type="button" aria-label="Versions" className="ml-auto flex h-[11px] w-[10px] items-center justify-center rounded-[2px] bg-white text-black">
            <ChevronDown className="size-[7px]" />
          </button>
        </div>
        <Bell className="ml-[3px] size-[9px] fill-[#e7b53c] text-[#e7b53c]" />
        <Settings className="ml-[3px] size-[10px] fill-[#ccc] text-[#ddd]" strokeWidth={3} />
        <button type="button" aria-label="Minimize" className="mt-[5px] ml-3 h-[2px] w-2 bg-white" />
        <button type="button" aria-label="Maximize" className="ml-1 h-[6px] w-2 border border-t-2 border-white" />
        <button type="button" aria-label="Close" className="ml-1">
          <X className="size-[9px]" strokeWidth={4} />
        </button>
      </header>

      <div className="px-px">
        <PanelHeader icon="copyDoc" title="Items Scope" />
        <div className="flex h-[100px] flex-col rounded-[3px] border border-[#d3dfe6] bg-white p-[2px]">
          <div className="mr-px flex h-[15px] items-center border border-[#e3e3e3] bg-[#f4f4f4] pl-1">
            <Icon name="sheetRoot" className="mr-px size-[9px]" />
            D:\SharpTask\CORNER JOINT.slddrw
          </div>
          <div className="mt-auto flex items-center gap-[2px] pr-[2px] pb-[2px]">
            <IconButton name="plus" className="size-[10px]" />
            <IconButton name="minus" className="size-[9px]" />
            <Icon name="funnelGrey" className="ml-auto size-[9px]" />
            <input aria-label="File types" defaultValue="slddrw, sldprt, sldasm" className="h-[13px] w-[75px] border border-[#bbb] px-px text-[#555] outline-none" />
            <IconButton name="part" className="size-3" box="size-[14px]" />
            <IconButton name="assembly" className="size-3" box="size-[14px]" />
            <IconButton name="drawingDoc" className="size-3" box="size-[14px]" />
          </div>
        </div>
      </div>

      <div className="mt-1 grid grid-cols-[164fr_164fr] gap-1 px-px">
        <div>
          <PanelHeader icon="clipboard" title="Tasks" />
          <TaskList />
        </div>
        <div>
          <PanelHeader icon="argIcon" title="Arguments" />
          <ArgumentList />
        </div>
      </div>

      <div className="mt-[2px] flex h-[26px] justify-end border-t border-[#c9c9c9] px-[2px] pt-[3px]">
        <button type="button" className="h-5 w-[45px] border border-[#999] bg-[#f7f7f7] text-[9px]">
          Run Job
        </button>
      </div>
      <footer className="grid h-[13px] grid-cols-[1fr_auto_1fr] items-center bg-[#363639] px-[2px] text-white">
        <div className="flex items-center gap-[2px] text-[#ee7a28]">
          <a href="#linkedin" aria-label="LinkedIn">
            <FaLinkedinIn className="size-2" />
          </a>
          <a href="#youtube" aria-label="YouTube">
            <Icon name="tube" className="size-[9px]" />
          </a>
          <a href="#mail" aria-label="Mail">
            <Mail className="size-[10px]" />
          </a>
        </div>
        <p className="font-['Noto_Serif','DejaVu_Serif',serif] text-[9px] font-bold">
          ce<span className="text-[#ee7a28]">n</span>tral <span className="font-['Liberation_Serif',serif] text-[8px] font-normal">innovation</span>
        </p>
        <b className="text-right">Dhivya New</b>
      </footer>
    </section>
  );
}

/* ---------- cloud callout ---------- */

const DEG = Math.PI / 180;

// [rx, ry, start angle, sweep] for every lobe, on a 43200 unit square
const lobes: number[][] = [
  [6753, 9190, -11429249, 7426832],
  [5333, 7267, -8646143, 5396714],
  [4365, 5945, -8748475, 5983381],
  [4857, 6595, -7859164, 7034504],
  [5333, 7273, -4722533, 6541615],
  [6775, 9220, -2776035, 7816140],
  [5785, 7867, 37501, 6842000],
  [6752, 9215, 1347096, 6910353],
  [7720, 10543, 3974558, 4542661],
  [4360, 5918, -16496525, 8804134],
  [4345, 5945, -14809710, 9151131],
];

// [x, y, rx, ry, start angle, sweep] for the short inner strokes
const folds: number[][] = [
  [4693, 26177, 4345, 5945, 5204520, 1585770],
  [6928, 34899, 4360, 5918, 4416628, 686848],
  [16478, 39090, 6752, 9215, 8257449, 844866],
  [28827, 34751, 6752, 9215, 387196, 959901],
  [34129, 22954, 5785, 7867, -4217541, 4255042],
  [41798, 15354, 5333, 7273, 1819082, 1665090],
  [38324, 5426, 4857, 6595, -824660, 891534],
  [29078, 3952, 4857, 6595, -8950887, 1091722],
  [22141, 4720, 4365, 5945, -9809656, 1061181],
  [14000, 5192, 6753, 9190, -4002417, 739161],
  [4127, 15789, 6753, 9190, 9459261, 711490],
];

function buildPath(x: number, y: number, arcs: number[][], w: number, h: number) {
  const sx = w / 43200;
  const sy = h / 43200;
  let px = x;
  let py = y;
  let d = `M${px * sx} ${py * sy}`;
  for (const [rx, ry, start, sweep] of arcs) {
    const a = (start / 60000) * DEG;
    const b = ((start + sweep) / 60000) * DEG;
    const ta = Math.atan2(rx * Math.sin(a), ry * Math.cos(a));
    const tb = Math.atan2(rx * Math.sin(b), ry * Math.cos(b));
    px += rx * (Math.cos(tb) - Math.cos(ta));
    py += ry * (Math.sin(tb) - Math.sin(ta));
    d += `A${rx * sx} ${ry * sy} 0 ${sweep > 10800000 ? 1 : 0} 1 ${px * sx} ${py * sy}`;
  }
  return d;
}

function CloudCallout() {
  const w = 232;
  const h = 129;
  return (
    <div className="absolute top-[110px] left-[896px] w-[234px]">
      <svg viewBox="0 0 234 312" className="block w-full overflow-visible" fill="none" stroke="#ed7d31" strokeWidth="2" aria-hidden="true">
        <path d={buildPath(3900, 14370, lobes, w, h) + "Z"} fill="#fff" />
        {folds.map(([x, y, ...arc], i) => (
          <path key={i} d={buildPath(x, y, [arc], w, h)} />
        ))}
        <circle cx="176.500" cy="184" r="10.800" fill="#fff" />
        <circle cx="208.700" cy="248" r="7.400" fill="#fff" />
        <circle cx="237.600" cy="305.800" r="3.800" fill="#fff" />
      </svg>
      <p className="absolute inset-x-0 top-[35px] pr-[18px] text-center font-['Lato',sans-serif] text-[14px] leading-[18px] text-[#ed7d31]">
        The note gets
        <br />
        inserted after
        <br />
        running the macro
      </p>
    </div>
  );
}

export default function App() {
  return (
    <div className="relative min-h-screen overflow-hidden bg-white font-['Open_Sans',sans-serif] [text-rendering:geometricPrecision]">
      <SolidWorksWindow size="large" className="top-[26px] left-1 h-[497px] w-[827px]" />
      <TaskDialog />
      <SolidWorksWindow size="small" className="top-[265px] left-[592px] h-[462px] w-[779px]" />
      <CloudCallout />
    </div>
  );
}
